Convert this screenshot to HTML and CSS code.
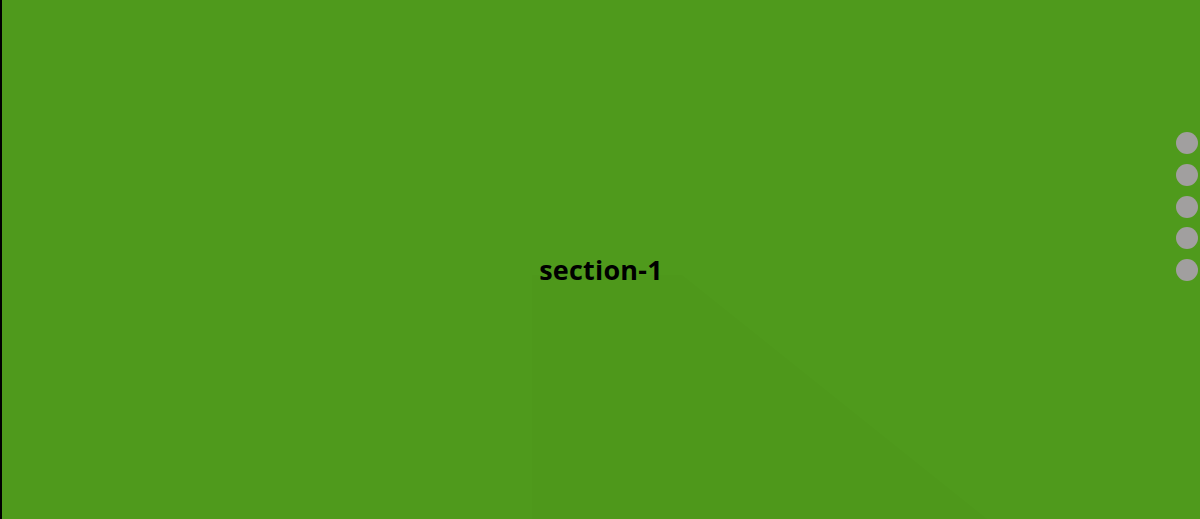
FILE: index.html
```html
<!DOCTYPE html>
<html>
<head>
<meta charset="utf-8">
<link rel="stylesheet" href="styles.css">
</head>
<body>
<main class="page">
  <section class="section">
    <h1 class="title">section-1</h1>
    <div class="shade"></div>
  </section>
  <nav class="dots">
    <span class="dot"></span>
    <span class="dot"></span>
    <span class="dot"></span>
    <span class="dot"></span>
    <span class="dot"></span>
  </nav>
</main>
</body>
</html>
```
FILE: styles.css
```css
html, body {
  margin: 0;
  padding: 0;
  height: 100%;
  overflow: hidden;
}
body {
  font-family: "Open Sans", "DejaVu Sans", sans-serif;
}
.page {
  position: relative;
  height: 519px;
  border-left: 2px solid #000;
  background: #4f9a1c;
  overflow: hidden;
}
.section {
  height: 100%;
  display: flex;
  align-items: center;
  justify-content: center;
  position: relative;
}
.title {
  margin: 20px 0 0 0;
  font-size: 27px;
  font-weight: 700;
  color: #000;
  letter-spacing: 0.2px;
  position: relative;
  z-index: 1;
}
.shade {
  position: absolute;
  left: 530px;
  top: 275px;
  width: 600px;
  height: 600px;
  background: rgba(0, 0, 0, 0.012);
  clip-path: polygon(0 0, 25% 0, 100% 60%, 100% 100%, 0 100%);
}
.dots {
  position: absolute;
  right: 2px;
  top: 132px;
  display: flex;
  flex-direction: column;
  gap: 9.75px;
}
.dot {
  display: block;
  width: 22px;
  height: 22px;
  border-radius: 50%;
  background: #a19f9f;
}
```
